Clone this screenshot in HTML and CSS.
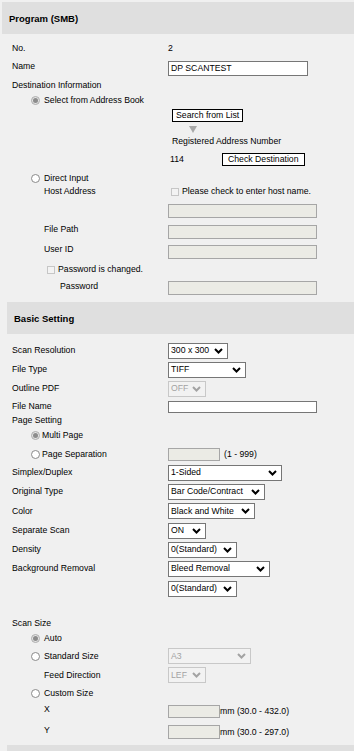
FILE: index.html
```html
<!DOCTYPE html>
<html lang="en">
<head>
    <meta charset="UTF-8">
    <meta name="viewport" content="width=device-width, initial-scale=1.0">
    <title>Program (SMB)</title>
    <link rel="stylesheet" href="styles.css">
</head>
<body>

<div class="page">
    <div class="sec sec-program">
        <div class="sec-head">Program (SMB)</div>
        <div class="sec-body">
            <div class="row h19"><div class="lbl">No.</div><div class="val">2</div></div>
            <div class="row h20 lift"><div class="lbl">Name</div><div class="val"><div class="field w140 h15f">DP SCANTEST</div></div></div>
            <div class="row h14"><div class="lbl">Destination Information</div></div>
            <div class="row h16"><div class="lbl in1"><span class="radio on dim"></span>Select from Address Book</div></div>
            <div class="row h14"><div class="lbl"></div><div class="val"><span class="btn btn-search">Search from List</span></div></div>
            <div class="row h14"><div class="lbl"></div><div class="val"><span class="arrow-down"></span></div></div>
            <div class="row h11"><div class="lbl"></div><div class="val"><span class="reg-title">Registered Address Number</span></div></div>
            <div class="row h25"><div class="lbl"></div><div class="val"><span class="num">114</span><span class="btn btn-check">Check Destination</span></div></div>
            <div class="row h12"><div class="lbl in1"><span class="radio"></span>Direct Input</div></div>
            <div class="row h15"><div class="lbl in2">Host Address</div><div class="val"><span class="check host-check"></span>Please check to enter host name.</div></div>
            <div class="row h24"><div class="lbl"></div><div class="val"><div class="field off w149"></div></div></div>
            <div class="row h17 lift"><div class="lbl in2">File Path</div><div class="val"><div class="field off w149"></div></div></div>
            <div class="row h23 lift"><div class="lbl in2">User ID</div><div class="val"><div class="field off w149"></div></div></div>
            <div class="row h13"><div class="lbl in3"><span class="check"></span>Password is changed.</div></div>
            <div class="row h24 lift"><div class="lbl in4">Password</div><div class="val"><div class="field off w149"></div></div></div>
        </div>
    </div>

    <div class="sec sec-basic">
        <div class="sec-head">Basic Setting</div>
        <div class="sec-body">
            <div class="row h17"><div class="lbl">Scan Resolution</div><div class="val">
                <div class="sel w60 h14f"><span>300 x 300</span><svg width="9" height="6" viewBox="0 0 9 6"><path d="M1 1l3.5 3.5L8 1" fill="none" stroke="currentColor" stroke-width="2"/></svg></div>
            </div></div>
            <div class="row h21"><div class="lbl">File Type</div><div class="val">
                <div class="sel w78"><span>TIFF</span><svg width="9" height="6" viewBox="0 0 9 6"><path d="M1 1l3.5 3.5L8 1" fill="none" stroke="currentColor" stroke-width="2"/></svg></div>
            </div></div>
            <div class="row h17"><div class="lbl">Outline PDF</div><div class="val">
                <div class="sel off w38"><span>OFF</span><svg width="9" height="6" viewBox="0 0 9 6"><path d="M1 1l3.5 3.5L8 1" fill="none" stroke="currentColor" stroke-width="2"/></svg></div>
            </div></div>
            <div class="row h19"><div class="lbl">File Name</div><div class="val"><div class="field w149 h12f"></div></div></div>
            <div class="row h8"><div class="lbl">Page Setting</div></div>
            <div class="row h23"><div class="lbl in1"><span class="radio on dim tight"></span>Multi Page</div></div>
            <div class="row h15"><div class="lbl in1"><span class="radio tight"></span>Page Separation</div><div class="val"><div class="field off w52 h13f"></div><span class="range">(1 - 999)</span></div></div>
            <div class="row h21"><div class="lbl">Simplex/Duplex</div><div class="val">
                <div class="sel w114"><span>1-Sided</span><svg width="9" height="6" viewBox="0 0 9 6"><path d="M1 1l3.5 3.5L8 1" fill="none" stroke="currentColor" stroke-width="2"/></svg></div>
            </div></div>
            <div class="row h17"><div class="lbl">Original Type</div><div class="val">
                <div class="sel w97"><span>Bar Code/Contract</span><svg width="9" height="6" viewBox="0 0 9 6"><path d="M1 1l3.5 3.5L8 1" fill="none" stroke="currentColor" stroke-width="2"/></svg></div>
            </div></div>
            <div class="row h22"><div class="lbl">Color</div><div class="val">
                <div class="sel w87 h15f"><span>Black and White</span><svg width="9" height="6" viewBox="0 0 9 6"><path d="M1 1l3.5 3.5L8 1" fill="none" stroke="currentColor" stroke-width="2"/></svg></div>
            </div></div>
            <div class="row h17"><div class="lbl">Separate Scan</div><div class="val">
                <div class="sel w38"><span>ON</span><svg width="9" height="6" viewBox="0 0 9 6"><path d="M1 1l3.5 3.5L8 1" fill="none" stroke="currentColor" stroke-width="2"/></svg></div>
            </div></div>
            <div class="row h21"><div class="lbl">Density</div><div class="val">
                <div class="sel w69"><span>0(Standard)</span><svg width="9" height="6" viewBox="0 0 9 6"><path d="M1 1l3.5 3.5L8 1" fill="none" stroke="currentColor" stroke-width="2"/></svg></div>
            </div></div>
            <div class="row h17"><div class="lbl">Background Removal</div><div class="val">
                <div class="sel w102"><span>Bleed Removal</span><svg width="9" height="6" viewBox="0 0 9 6"><path d="M1 1l3.5 3.5L8 1" fill="none" stroke="currentColor" stroke-width="2"/></svg></div>
            </div></div>
            <div class="row h23"><div class="lbl"></div><div class="val">
                <div class="sel w69"><span>0(Standard)</span><svg width="9" height="6" viewBox="0 0 9 6"><path d="M1 1l3.5 3.5L8 1" fill="none" stroke="currentColor" stroke-width="2"/></svg></div>
            </div></div>

            <div class="row h19 gap-top"><div class="lbl">Scan Size</div></div>
            <div class="row h11"><div class="lbl in1"><span class="radio on dim"></span>Auto</div></div>
            <div class="row h24"><div class="lbl in1"><span class="radio"></span>Standard Size</div><div class="val">
                <div class="sel off w83 h17f"><span>A3</span><svg width="9" height="6" viewBox="0 0 9 6"><path d="M1 1l3.5 3.5L8 1" fill="none" stroke="currentColor" stroke-width="2"/></svg></div>
            </div></div>
            <div class="row h14"><div class="lbl in2">Feed Direction</div><div class="val">
                <div class="sel off w38 h15f"><span>LEF</span><svg width="9" height="6" viewBox="0 0 9 6"><path d="M1 1l3.5 3.5L8 1" fill="none" stroke="currentColor" stroke-width="2"/></svg></div>
            </div></div>
            <div class="row h22"><div class="lbl in1"><span class="radio"></span>Custom Size</div></div>
            <div class="row h15 lift"><div class="lbl in2">X</div><div class="val"><div class="field off w52 h13f"></div><span>mm (30.0 - 432.0)</span></div></div>
            <div class="row h26 lift"><div class="lbl in2">Y</div><div class="val"><div class="field off w52"></div><span>mm (30.0 - 297.0)</span></div></div>
        </div>
    </div>

    <div class="sec sec-next">
        <div class="sec-head"></div>
    </div>
</div>

</body>
</html>
```

FILE: styles.css
```css
* {
    box-sizing: border-box;
}
body {
    margin: 0;
    background: #f0f0f0;
    font-family: "Liberation Sans", Arial, sans-serif;
    font-size: 8.7px;
    line-height: 11px;
    color: #000;
    overflow: hidden;
}
.page {
    padding-top: 2px;
}

/* section blocks */
.sec-head {
    height: 32px;
    display: flex;
    align-items: center;
    padding-left: 7px;
    background: #dfdfdf;
    font-size: 9.5px;
    font-weight: bold;
}
.sec-program {
    margin-left: 2px;
}
.sec-program .sec-body {
    padding: 5px 0 0 10px;
}
.sec-basic {
    margin: 2px 0 0 7px;
}
.sec-basic .sec-body {
    padding: 8px 0 0 5px;
}
.sec-next {
    margin-left: 7px;
}

/* rows */
.row {
    display: flex;
    align-items: center;
    white-space: nowrap;
}
.lbl {
    width: 156px;
    flex: none;
    display: flex;
    align-items: center;
}
.val {
    display: flex;
    align-items: center;
}
.lift .lbl {
    padding-bottom: 4px; /* labels sit a bit above their fields */
}
.in1 { padding-left: 19px; }
.in2 { padding-left: 32px; }
.in3 { padding-left: 35px; }
.in4 { padding-left: 48px; }
.gap-top { margin-top: 14px; }

.h8 { height: 8px; }
.h11 { height: 11px; }
.h12 { height: 12px; }
.h13 { height: 13px; }
.h14 { height: 14px; }
.h15 { height: 15px; }
.h16 { height: 16px; }
.h17 { height: 17px; }
.h19 { height: 19px; }
.h20 { height: 20px; }
.h21 { height: 21px; }
.h22 { height: 22px; }
.h23 { height: 23px; }
.h24 { height: 24px; }
.h25 { height: 25px; }
.h26 { height: 26px; }

/* radio and check boxes */
.radio {
    width: 9px;
    height: 9px;
    flex: none;
    margin-right: 4px;
    border: 1px solid #8a8a8a;
    border-radius: 50%;
    background: #fff;
    display: flex;
    align-items: center;
    justify-content: center;
}
.radio.tight {
    margin-right: 2px;
}
.radio.dim {
    border-color: #adadad;
    background: #e4e4e4;
}
.radio.on::after {
    content: "";
    width: 5px;
    height: 5px;
    border-radius: 50%;
    background: #8c8c8c;
}
.check {
    width: 8px;
    height: 8px;
    flex: none;
    margin-right: 3px;
    border: 1px solid #c6c6c6;
    background: #f3f3f3;
}
.host-check {
    margin-left: 3px;
}

/* buttons */
.btn {
    height: 13px;
    display: flex;
    align-items: center;
    padding: 0 3px;
    border: 1px solid #000;
    background: #fff;
}
.btn-search {
    margin-left: 4px;
}
.btn-check {
    padding: 0 5px;
}
.arrow-down {
    width: 0;
    height: 0;
    margin-left: 21px;
    border-left: 4px solid transparent;
    border-right: 4px solid transparent;
    border-top: 7px solid #a8a8a8;
}
.reg-title {
    margin-left: 4px;
}
.num {
    width: 54px;
    padding-left: 2px;
}

/* text fields */
.field {
    height: 14px;
    display: flex;
    align-items: center;
    padding: 0 2px;
    border: 1px solid #767676;
    background: #fff;
}
.field.off {
    border-color: #a6a6a6;
    background: #ebebe5;
}
.h12f { height: 12px; }
.h13f { height: 13px; }
.h14f { height: 14px; }
.h15f { height: 15px; }
.h17f { height: 17px; }
.range {
    margin-left: 4px;
}

/* drop downs */
.sel {
    height: 16px;
    display: flex;
    align-items: center;
    justify-content: space-between;
    padding: 0 4px 0 2px;
    border: 1px solid #767676;
    background: #fff;
    color: #000;
}
.sel svg {
    flex: none;
}
.sel.off {
    border-color: #c8c8c8;
    background: #f2f2f2;
    color: #a3a3a3;
}

.w38 { width: 38px; }
.w52 { width: 52px; }
.w60 { width: 60px; }
.w69 { width: 69px; }
.w78 { width: 78px; }
.w83 { width: 83px; }
.w87 { width: 87px; }
.w97 { width: 97px; }
.w102 { width: 102px; }
.w114 { width: 114px; }
.w140 { width: 140px; }
.w149 { width: 149px; }
```
